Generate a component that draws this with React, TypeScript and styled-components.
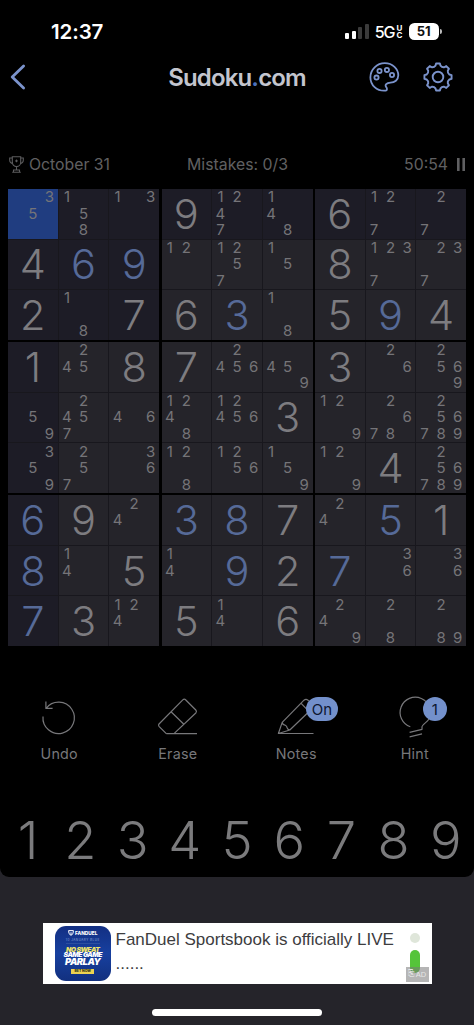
import React from "react";
import styled, { createGlobalStyle } from "styled-components";

const GlobalStyle = createGlobalStyle`
  html, body { margin: 0; padding: 0; background: #000; }
  * { box-sizing: border-box; }
`;

const Screen = styled.main`
  width: 474px;
  height: 1025px;
  display: flex;
  flex-direction: column;
  background: #25242a;
  font-family: Inter, "Liberation Sans", sans-serif;
  overflow: hidden;
`;

const Game = styled.section`
  height: 877px;
  flex: none;
  display: flex;
  flex-direction: column;
  background: #000;
  border-radius: 0 0 9px 9px;
`;

const StatusBar = styled.div`
  height: 54px;
  padding: 9px 32px 0 51px;
  display: flex;
  align-items: center;
  justify-content: space-between;
  color: #fff;
`;

const Clock = styled.span`
  font-size: 20.5px;
  font-weight: 600;
  letter-spacing: -0.1px;
`;

const StatusRight = styled.div`
  display: flex;
  align-items: center;
`;

const Signal = styled.div`
  display: flex;
  align-items: flex-end;
  gap: 2.6px;
  height: 15px;
`;

const Bar = styled.i<{ $h: number; $on?: boolean }>`
  width: 4px;
  height: ${(p) => p.$h}px;
  border-radius: 1px;
  background: ${(p) => (p.$on ? "#fff" : "#3b3b3b")};
`;

const Network = styled.span`
  margin-left: 6px;
  font-size: 16px;
  font-weight: 500;
  letter-spacing: -1.3px;
`;

const NetworkSub = styled.span`
  display: flex;
  flex-direction: column;
  margin-left: 2.5px;
  font-size: 8px;
  line-height: 7px;
  font-weight: 700;
  text-align: center;
`;

const Battery = styled.span`
  width: 30.5px;
  height: 17px;
  margin-left: 6px;
  border-radius: 5.5px;
  background: #fff;
  color: #111;
  font-size: 13px;
  font-weight: 700;
  line-height: 17px;
  text-align: center;
`;

const BatteryTip = styled.i`
  width: 2px;
  height: 5px;
  margin-left: 1px;
  border-radius: 0 2px 2px 0;
  background: #bbb;
`;

const NavBar = styled.header`
  height: 46px;
  display: grid;
  grid-template-columns: 1fr auto 1fr;
  align-items: center;
  padding: 0 21.5px 0 9px;
`;

const NavActions = styled.div`
  display: flex;
  justify-content: flex-end;
  gap: 22.5px;
`;

const Title = styled.h1`
  margin: 0;
  padding-left: 12.5px;
  font-size: 24px;
  font-weight: 600;
  letter-spacing: -0.85px;
  color: #c3c5ce;
`;

const Dot = styled.span`
  color: #4c70bd;
`;

const Info = styled.div`
  margin-top: 51px;
  height: 26px;
  padding: 0 8px 0 9px;
  display: grid;
  grid-template-columns: 1fr auto 1fr;
  align-items: center;
  font-size: 15.8px;
  color: #606062;
`;

const InfoSide = styled.div<{ $end?: boolean }>`
  display: flex;
  align-items: center;
  justify-content: ${(p) => (p.$end ? "flex-end" : "flex-start")};
  gap: ${(p) => (p.$end ? 9 : 5)}px;
`;

const Board = styled.div`
  width: 458px;
  height: 457px;
  margin: 12px 0 0 8px;
  display: grid;
  grid-template-columns: repeat(3, 1fr);
  grid-template-rows: repeat(3, 1fr);
  gap: 2.5px;
`;

const Block = styled.div`
  display: grid;
  grid-template-columns: repeat(3, 1fr);
  grid-template-rows: repeat(3, 1fr);
  gap: 1px;
  background: #18171d;
`;

type Tone = "plain" | "related" | "selected";
const tones: Record<Tone, string> = {
  plain: "#25242a",
  related: "#1d1c26",
  selected: "#203d80",
};

const Cell = styled.div<{ $tone: Tone }>`
  min-width: 0;
  min-height: 0;
  display: grid;
  background: ${(p) => tones[p.$tone]};
`;

const Digit = styled.span<{ $mine?: boolean }>`
  place-self: center;
  font-size: 41.5px;
  line-height: 48px;
  font-weight: 300;
  color: ${(p) => (p.$mine ? "#566a98" : "#7d7c80")};
`;

const Notes = styled.div`
  display: grid;
  grid-template-columns: repeat(3, 1fr);
  grid-template-rows: repeat(3, 1fr);
`;

const Note = styled.span<{ $n: number }>`
  grid-column: ${(p) => ((p.$n - 1) % 3) + 1};
  grid-row: ${(p) => Math.ceil(p.$n / 3)};
  place-self: center;
  font-size: 15px;
  line-height: 16px;
  color: #757478;
`;

const Tools = styled.div`
  margin-top: 47px;
  display: grid;
  grid-template-columns: repeat(4, 1fr);
`;

const Tool = styled.div`
  position: relative;
  display: flex;
  flex-direction: column;
  align-items: center;
  gap: 3px;
  font-size: 14.3px;
  line-height: 20px;
  color: #77777a;
  letter-spacing: 0.25px;
`;

const Badge = styled.span<{ $w: number; $x: number }>`
  position: absolute;
  top: 3.5px;
  left: ${(p) => p.$x}px;
  width: ${(p) => p.$w}px;
  height: 24.5px;
  border-radius: 13px;
  background: #7390cb;
  color: #0d1630;
  font-size: 15px;
  line-height: 25px;
  letter-spacing: 0;
  text-align: center;
`;

const Keypad = styled.div`
  margin: 44px 0 0 2px;
  width: 470px;
  display: grid;
  grid-template-columns: repeat(9, 1fr);
`;

const Key = styled.span`
  text-align: center;
  font-size: 52.5px;
  line-height: 64px;
  font-weight: 300;
  color: #7b7b7d;
`;

const Footer = styled.footer`
  flex: 1;
  display: flex;
  flex-direction: column;
  align-items: center;
  padding-top: 45.5px;
`;

const Ad = styled.div`
  width: 389px;
  height: 61px;
  display: flex;
  background: #fff;
  padding: 3px 2px 2px 12.5px;
`;

const AdTile = styled.div`
  width: 55.5px;
  height: 55.5px;
  flex: none;
  border-radius: 11px;
  background: linear-gradient(#132f83, #17409f 50%, #12307f);
  display: flex;
  flex-direction: column;
  align-items: center;
  color: #fff;
  overflow: hidden;
`;

const TileBrand = styled.div`
  display: flex;
  align-items: center;
  gap: 1px;
  margin-top: 4px;
  font-size: 4.8px;
  line-height: 6px;
  font-weight: 800;
`;

const TileDate = styled.div`
  margin: 3px 0 3px;
  padding-bottom: 1px;
  border-bottom: 1px solid #2c4f9f;
  font-size: 3px;
  line-height: 3px;
  letter-spacing: 0.5px;
  color: #8ba2d6;
`;

const TileLine = styled.div<{ $size: number; $gold?: boolean }>`
  font-size: ${(p) => p.$size}px;
  line-height: ${(p) => p.$size * 0.86}px;
  font-weight: 900;
  font-style: italic;
  letter-spacing: -0.5px;
  white-space: nowrap;
  color: ${(p) => (p.$gold ? "#eee36a" : "#fff")};
`;

const TileButton = styled.div`
  width: 23px;
  height: 5px;
  margin-top: 2.5px;
  background: #ecd251;
  color: #30300f;
  font-size: 3.5px;
  line-height: 5px;
  font-weight: 800;
  text-align: center;
`;

const AdText = styled.div`
  flex: 1;
  margin-left: 5px;
  padding-top: 2px;
  font-family: "Liberation Sans", Arial, sans-serif;
  font-size: 17px;
  line-height: 24px;
  color: #3d3d3f;
  white-space: nowrap;
`;

const AdSide = styled.div`
  position: relative;
  width: 25px;
  display: flex;
  flex-direction: column;
  align-items: center;
  padding: 7.5px 3px 0 0;
  margin-right: 1px;
`;

const Knob = styled.i`
  width: 10px;
  height: 10px;
  border-radius: 50%;
  background: #dfe6da;
`;

const Pill = styled.i`
  width: 10px;
  height: 23px;
  margin-top: 7px;
  border-radius: 5px;
  background: #55c43a;
`;

const AdTag = styled.span`
  position: absolute;
  right: 0;
  bottom: 0;
  width: 23px;
  height: 14.5px;
  display: flex;
  align-items: center;
  justify-content: center;
  gap: 2px;
  background: rgba(120, 120, 120, 0.55);
  color: #e6e6e6;
  font-family: "Liberation Sans", Arial, sans-serif;
  font-size: 7.5px;
`;

const HomeBar = styled.div`
  width: 170px;
  height: 6.5px;
  margin-top: 25.5px;
  border-radius: 4px;
  background: #fff;
`;

const accent = "#7b93cc";

const teeth = Array.from({ length: 8 }, (_, i) =>
  [
    [-0.22, 11.6],
    [-0.14, 13.7],
    [0.14, 13.7],
    [0.22, 11.6],
  ].map(([da, r]) => {
    const a = (i * Math.PI) / 4 + da;
    return `${(15 + r * Math.sin(a)).toFixed(2)} ${(15 - r * Math.cos(a)).toFixed(2)}`;
  })
);
const gearPath =
  teeth
    .map(
      ([a, b, c, d], i) =>
        `${i ? `A4 4 0 0 0 ${a}` : `M${a}`}L${b}L${c}L${d}`
    )
    .join("") + `A4 4 0 0 0 ${teeth[0][0]}Z`;

const GearIcon = () => (
  <svg width="30" height="30" fill="none" stroke={accent} strokeWidth="1.9" strokeLinejoin="round">
    <path d={gearPath} />
    <circle cx="15" cy="15" r="5.3" />
  </svg>
);

const PaletteIcon = () => (
  <svg width="32" height="30" fill="none" stroke={accent} strokeWidth="1.8" strokeLinejoin="round">
    <path d="M17.8 28.6C8.5 29.5 2.4 22.7 2.4 15.4C2.4 7.4 8.9 1.2 16.8 1.2C24.6 1.2 30.3 6.8 30.3 13.2C30.3 18 26.5 20.6 22.5 20.6C18.4 20.8 16.6 23 18.2 25.1C19.2 26.6 19.4 28.2 17.8 28.6Z" />
    <circle cx="8.5" cy="15.6" r="2.1" />
    <circle cx="11.5" cy="8.9" r="2.1" />
    <circle cx="18.9" cy="7.9" r="2.1" />
    <circle cx="24" cy="13" r="2.1" />
  </svg>
);

const BackIcon = () => (
  <svg width="18" height="28" fill="none" stroke={accent} strokeWidth="2.8" strokeLinecap="round" strokeLinejoin="round">
    <path d="M14.6 2.9L3.2 14L14.6 25" />
  </svg>
);

const TrophyIcon = () => (
  <svg width="15" height="17" fill="none" stroke="#5c5c5e" strokeWidth="1.1">
    <path d="M3.3 0.8H11.7V6.2C11.7 9 9.8 10.6 7.5 10.6S3.3 9 3.3 6.2ZM3.3 2H0.7V4C0.7 6.3 2 7.3 4 7.5M11.7 2H14.3V4C14.3 6.3 13 7.3 11 7.5M7.5 10.6V14M4.5 16V14H10.5V16M3.2 16.2H11.8" />
    <path d="M7.5 3.3L8.9 5L7.5 6.5L6.1 5Z" fill="#5c5c5e" stroke="none" />
  </svg>
);

const PauseIcon = () => (
  <svg width="9" height="13" fill="#606062">
    <rect x="0" width="2.6" height="13" />
    <rect x="5.4" width="2.6" height="13" />
  </svg>
);

const ShieldIcon = () => (
  <svg width="6" height="6" fill="none" stroke="#fff" strokeWidth="1">
    <path d="M0.6 0.6H5.4L5 3.6L3 5.4L1 3.6ZM3 2.3V5" />
  </svg>
);

const ToolIcon = ({ d }: { d: string }) => (
  <svg width="48" height="48" fill="none" stroke="#77777a" strokeWidth="1.2" strokeLinejoin="round">
    <path d={d} />
  </svg>
);

const tools = [
  {
    label: "Undo",
    d: "M8 23.5A15.7 15.7 0 1 0 11.2 15.3M10.9 8.5V15.4H17.6",
  },
  {
    label: "Erase",
    d: "M12.3 40.6L5 33.3Q4 32.2 5 31L28.8 6.9Q30.3 5.5 31.8 7L41.8 17Q43.2 18.4 41.8 20L20 40.6M12.3 40.6H43M17.3 19L29.6 31",
  },
  {
    label: "Notes",
    d: "M6.4 40.5L10.2 29.4L32 7.2Q34 5.4 36 7.2L40.5 11.7Q42 13.5 40.5 15.2L17.8 37L6.4 40.5H41.5M10.2 29.4Q11 32.2 13.2 32.2Q15 33 15 34.6Q15.6 36.6 17.8 37M29.4 10.6L37 18.5",
    badge: { text: "On", w: 32, x: 69 },
  },
  {
    label: "Hint",
    d: "M19.3 33.8A15.2 15.2 0 1 1 38 26C35.8 29.6 31 31.5 31 34V36.3L18.6 39.4M18.6 43.8L31 40.8",
    badge: { text: "1", w: 24.5, x: 67 },
  },
];

// "=n" is a printed digit, "+n" one entered by the player, anything else pencil notes.
const rows = [
  ["35", "158", "13", "=9", "1247", "148", "=6", "127", "27"],
  ["=4", "+6", "+9", "12", "1257", "15", "=8", "1237", "237"],
  ["=2", "18", "=7", "=6", "+3", "18", "=5", "+9", "=4"],
  ["=1", "245", "=8", "=7", "2456", "459", "=3", "26", "2569"],
  ["59", "2457", "46", "1248", "12456", "=3", "129", "2678", "256789"],
  ["359", "257", "36", "128", "1256", "159", "129", "=4", "256789"],
  ["+6", "=9", "24", "+3", "+8", "=7", "24", "+5", "=1"],
  ["+8", "14", "=5", "14", "+9", "=2", "+7", "36", "36"],
  ["+7", "=3", "124", "=5", "14", "=6", "249", "28", "289"],
];

const span = [0, 1, 2];
const digits = [1, 2, 3, 4, 5, 6, 7, 8, 9];

const toneOf = (r: number, c: number): Tone =>
  r === 0 && c === 0
    ? "selected"
    : r === 0 || c === 0 || (r < 3 && c < 3)
    ? "related"
    : "plain";

const SudokuCell = ({ r, c }: { r: number; c: number }) => {
  const value = rows[r][c];
  const filled = value[0] === "=" || value[0] === "+";
  return (
    <Cell $tone={toneOf(r, c)}>
      {filled ? (
        <Digit $mine={value[0] === "+"}>{value[1]}</Digit>
      ) : (
        <Notes>
          {value.split("").map((n) => (
            <Note key={n} $n={Number(n)}>
              {n}
            </Note>
          ))}
        </Notes>
      )}
    </Cell>
  );
};

export default function App() {
  return (
    <Screen>
      <GlobalStyle />
      <Game>
        <StatusBar>
          <Clock>12:37</Clock>
          <StatusRight>
            <Signal>
              <Bar $h={6} $on />
              <Bar $h={8.5} $on />
              <Bar $h={12} />
              <Bar $h={15} />
            </Signal>
            <Network>5G</Network>
            <NetworkSub>
              <span>U</span>
              <span>C</span>
            </NetworkSub>
            <Battery>51</Battery>
            <BatteryTip />
          </StatusRight>
        </StatusBar>
        <NavBar>
          <BackIcon />
          <Title>
            Sudoku<Dot>.</Dot>com
          </Title>
          <NavActions>
            <PaletteIcon />
            <GearIcon />
          </NavActions>
        </NavBar>
        <Info>
          <InfoSide>
            <TrophyIcon />
            <span>October 31</span>
          </InfoSide>
          <span>Mistakes: 0/3</span>
          <InfoSide $end>
            <span>50:54</span>
            <PauseIcon />
          </InfoSide>
        </Info>
        <Board>
          {span.map((br) =>
            span.map((bc) => (
              <Block key={`${br}${bc}`}>
                {span.map((r) =>
                  span.map((c) => (
                    <SudokuCell key={`${r}${c}`} r={br * 3 + r} c={bc * 3 + c} />
                  ))
                )}
              </Block>
            ))
          )}
        </Board>
        <Tools>
          {tools.map((t) => (
            <Tool key={t.label}>
              <ToolIcon d={t.d} />
              <span>{t.label}</span>
              {t.badge && (
                <Badge $w={t.badge.w} $x={t.badge.x}>
                  {t.badge.text}
                </Badge>
              )}
            </Tool>
          ))}
        </Tools>
        <Keypad>
          {digits.map((n) => (
            <Key key={n}>{n}</Key>
          ))}
        </Keypad>
      </Game>
      <Footer>
        <Ad>
          <AdTile>
            <TileBrand>
              <ShieldIcon />
              FANDUEL
            </TileBrand>
            <TileDate>10 JANUARY BLUE</TileDate>
            <TileLine $size={6.8} $gold>
              NO SWEAT
            </TileLine>
            <TileLine $size={6.8}>SAME GAME</TileLine>
            <TileLine $size={9.4}>PARLAY</TileLine>
            <TileButton>BET NOW</TileButton>
          </AdTile>
          <AdText>
            FanDuel Sportsbook is officially LIVE
            <br />
            ......
          </AdText>
          <AdSide>
            <Knob />
            <Pill />
            <AdTag>
              <span>⎘</span>AD
            </AdTag>
          </AdSide>
        </Ad>
        <HomeBar />
      </Footer>
    </Screen>
  );
}
